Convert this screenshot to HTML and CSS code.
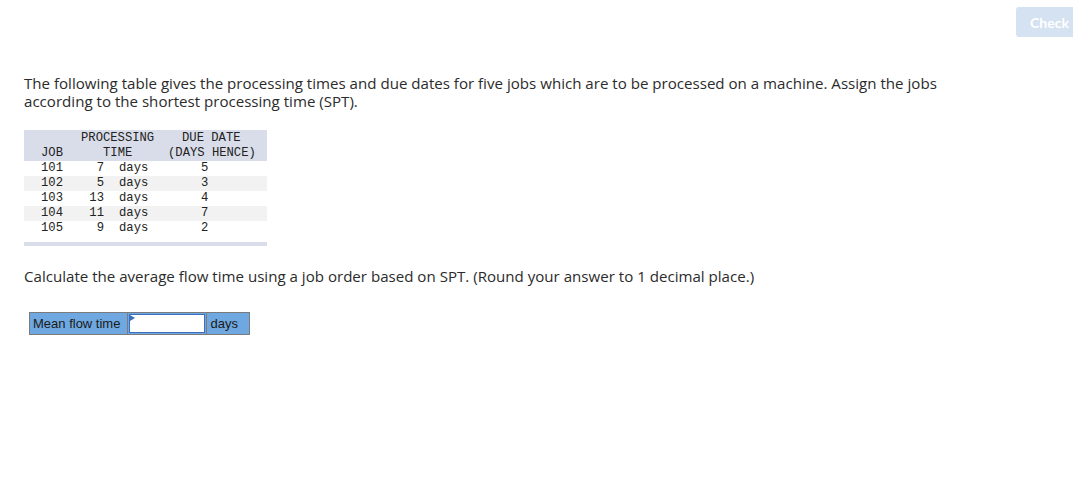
FILE: index.html
```html
<!DOCTYPE html>
<html>
<head>
<meta charset="utf-8">
<link rel="stylesheet" href="styles.css">
</head>
<body>
<div class="topbar">
  <button class="check-btn">Check</button>
</div>
<div class="content">
  <p class="intro">The following table gives the processing times and due dates for five jobs which are to be processed on a machine. Assign the jobs according to the shortest processing time (SPT).</p>
  <div class="jobs">
    <div class="jobs-head">
      <div class="jrow"><span></span><span>PROCESSING</span><span class="due-top">DUE DATE</span></div>
      <div class="jrow"><span>JOB</span><span class="time">TIME</span><span>(DAYS HENCE)</span></div>
    </div>
    <div class="jrow"><span>101</span><span><span class="n">7</span><span class="u">days</span></span><span class="dd">5</span></div>
    <div class="jrow alt"><span>102</span><span><span class="n">5</span><span class="u">days</span></span><span class="dd">3</span></div>
    <div class="jrow"><span>103</span><span><span class="n">13</span><span class="u">days</span></span><span class="dd">4</span></div>
    <div class="jrow alt"><span>104</span><span><span class="n">11</span><span class="u">days</span></span><span class="dd">7</span></div>
    <div class="jrow"><span>105</span><span><span class="n">9</span><span class="u">days</span></span><span class="dd">2</span></div>
    <div class="jobs-foot"></div>
  </div>
  <p class="question">Calculate the average flow time using a job order based on SPT. (Round your answer to 1 decimal place.)</p>
  <div class="answer">
    <span class="cell label">Mean flow time</span>
    <span class="cell input-cell"><input class="answer-input" type="text"><span class="flag"></span></span>
    <span class="cell unit">days</span>
  </div>
</div>
</body>
</html>
```
FILE: styles.css
```css
body {
  margin: 0;
  font-family: "Open Sans", "Liberation Sans", sans-serif;
  color: #2b2b2b;
  background: #fff;
}
.topbar {
  display: flex;
  justify-content: flex-end;
  padding-top: 7px;
  overflow: hidden;
}
.check-btn {
  width: 72px;
  height: 30px;
  margin-right: -15px;
  border: none;
  border-radius: 3px;
  background: #d4e2f2;
  color: #fff;
  font-family: "Lato", "Liberation Sans", sans-serif;
  font-weight: 700;
  font-size: 14px;
  padding: 0 0 0 14px;
  text-align: left;
}
.content {
  padding-left: 24px;
}
.intro {
  margin: 37px 0 0 0;
  width: 930px;
  font-size: 15.1px;
  line-height: 18px;
}
.jobs {
  margin-top: 20px;
  width: 243px;
  font-family: "Liberation Mono", monospace;
  font-size: 12.2px;
  line-height: 15px;
  color: #222;
}
.jobs-head {
  background: #d9dde9;
  padding-top: 1px;
}
.jrow {
  display: grid;
  grid-template-columns: 40px 87px 1fr;
  padding-left: 17px;
  height: 15px;
  white-space: pre;
}
.jrow.alt {
  background: #f2f2f2;
}
.due-top {
  padding-left: 14px;
}
.time {
  padding-left: 22px;
}
.n {
  display: inline-block;
  width: 23px;
  text-align: right;
}
.u {
  margin-left: 15px;
}
.dd {
  padding-left: 33px;
}
.jobs-foot {
  margin-top: 6px;
  height: 4px;
  background: #d9dde9;
}
.question {
  margin: 21px 0 0 0;
  font-size: 15.1px;
  line-height: 18px;
}
.answer {
  margin: 27px 0 0 5px;
  display: flex;
  height: 23px;
  font-family: "Liberation Sans", sans-serif;
  font-size: 13px;
}
.cell {
  display: flex;
  align-items: center;
  box-sizing: border-box;
  border: 1px solid #7b7b7b;
}
.label {
  background: #6fa8e0;
  padding: 0 7px 0 3px;
  color: #1a1a1a;
  border-right: none;
}
.unit {
  background: #6fa8e0;
  padding: 0 11px 0 3px;
  color: #1a1a1a;
  border-left: none;
}
.input-cell {
  position: relative;
  width: 80px;
  padding: 1px;
  background: #6fa8e0;
}
.answer-input {
  box-sizing: border-box;
  width: 100%;
  height: 100%;
  border: 1px solid #3a6fc0;
  background: #fff;
  margin: 0;
  padding: 0;
  outline: none;
}
.flag {
  position: absolute;
  left: 2px;
  top: 2px;
  width: 0;
  height: 0;
  border-top: 3px solid transparent;
  border-bottom: 3px solid transparent;
  border-left: 5px solid #3a6fc0;
}
```
